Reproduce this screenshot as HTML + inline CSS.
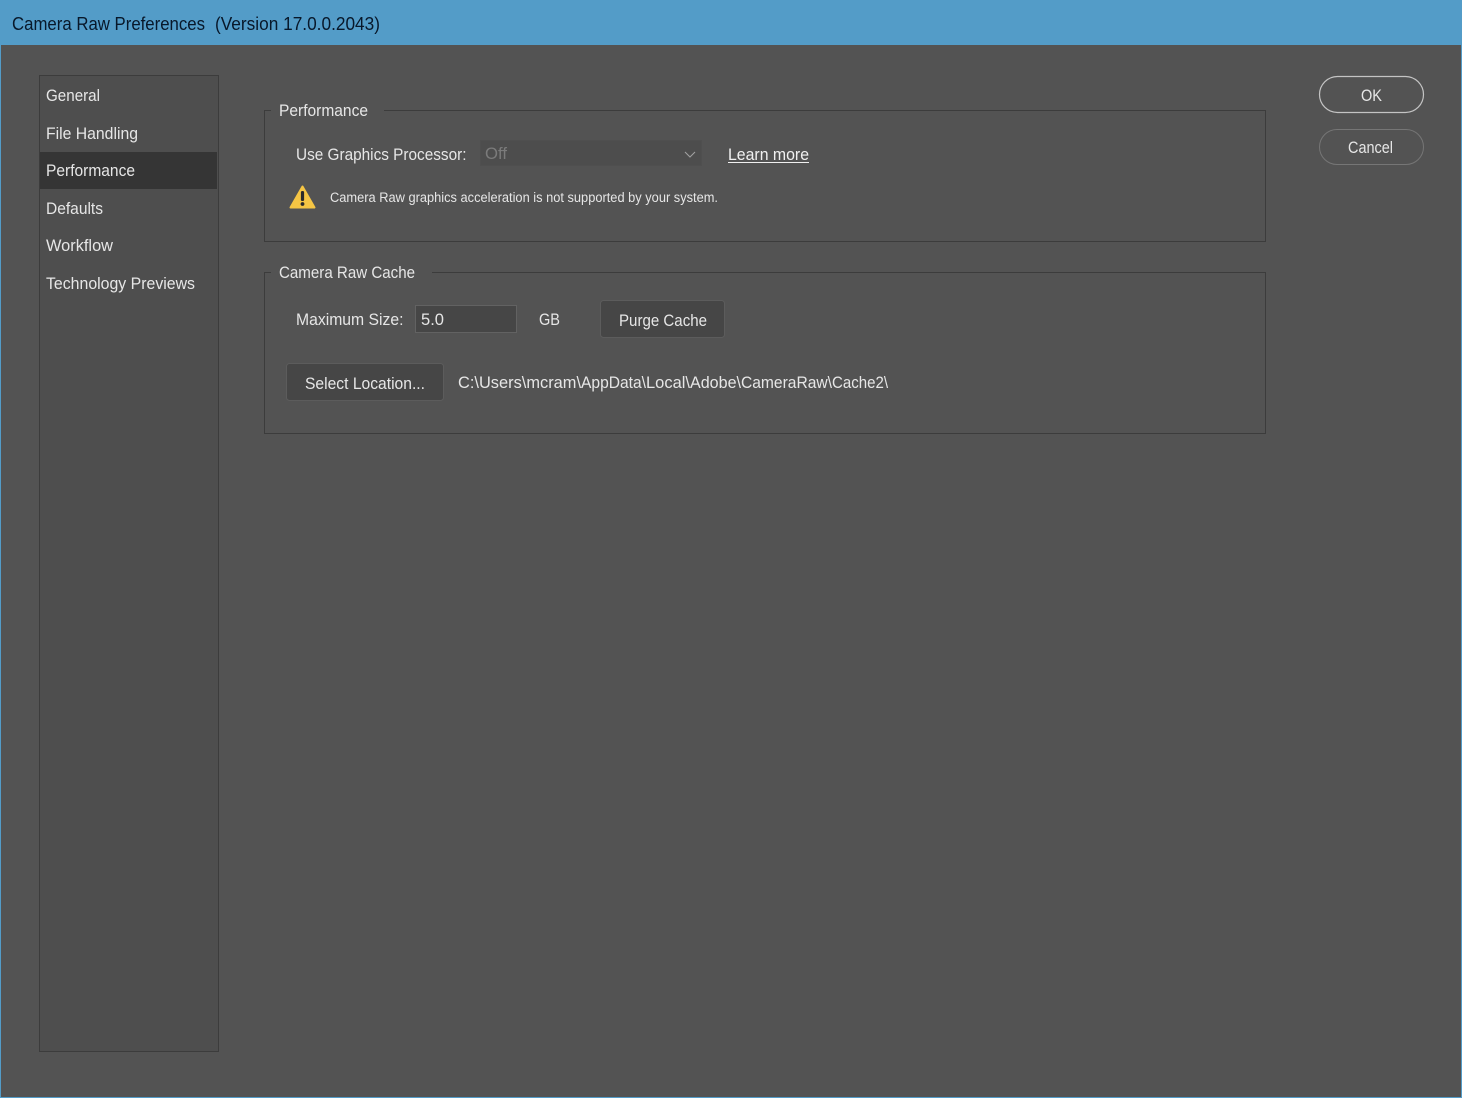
<!DOCTYPE html>
<html>
<head>
<meta charset="utf-8">
<title>Camera Raw Preferences</title>
<style>
html,body{margin:0;padding:0;background:#535353;width:1462px;height:1098px;overflow:hidden}
svg{display:block;position:absolute;left:0;top:0}
text{font-family:"Liberation Sans",sans-serif;font-size:17px;fill:#e6e6e6;white-space:pre}
</style>
</head>
<body>
<svg width="1462" height="1098" viewBox="0 0 1462 1098" xmlns="http://www.w3.org/2000/svg">
<rect x="0" y="0" width="1462" height="1098" fill="#539cc8"/>
<rect x="1" y="45" width="1460" height="1052" fill="#535353"/>
<text x="12" y="30" textLength="193" lengthAdjust="spacingAndGlyphs" style="font-size:18px;fill:#08182a">Camera Raw Preferences</text>
<text x="215" y="30" textLength="165" lengthAdjust="spacingAndGlyphs" style="font-size:18px;fill:#08182a">(Version 17.0.0.2043)</text>

<rect x="39.5" y="75.5" width="179" height="976" fill="#4e4e4e" stroke="#3c3c3c"/>
<rect x="40" y="152" width="177" height="37" fill="#353535"/>
<text x="46" y="101" textLength="54" lengthAdjust="spacingAndGlyphs">General</text>
<text x="46" y="139" textLength="92" lengthAdjust="spacingAndGlyphs">File Handling</text>
<text x="46" y="176" textLength="89" lengthAdjust="spacingAndGlyphs">Performance</text>
<text x="46" y="214" textLength="57" lengthAdjust="spacingAndGlyphs">Defaults</text>
<text x="46" y="251" textLength="67" lengthAdjust="spacingAndGlyphs">Workflow</text>
<text x="46" y="289" textLength="149" lengthAdjust="spacingAndGlyphs">Technology Previews</text>

<path d="M271 110.5H264.5V241.5H1265.5V110.5H384" fill="none" stroke="#3c3c3c"/>
<text x="279" y="116" textLength="89" lengthAdjust="spacingAndGlyphs">Performance</text>
<text x="296" y="160" textLength="170.5" lengthAdjust="spacingAndGlyphs">Use Graphics Processor:</text>
<rect x="480.5" y="140.5" width="221" height="25" fill="#4d4d4d" stroke="#4f4f4f"/>
<text x="485" y="159" textLength="22" lengthAdjust="spacingAndGlyphs" style="fill:#7b7b7b">Off</text>
<path d="M685 152L690 157L695 152" fill="none" stroke="#a0a0a0" stroke-width="1.1"/>
<text x="728" y="160" textLength="81" lengthAdjust="spacingAndGlyphs" style="fill:#f0f0f0">Learn more</text>
<rect x="728" y="162" width="81" height="1" fill="#f0f0f0"/>
<path d="M302.5 186.5L314.5 207.5H290.5Z" fill="#f5c544" stroke="#f5c544" stroke-width="2" stroke-linejoin="round"/>
<rect x="300.9" y="191" width="3.2" height="10" rx="1.4" fill="#2a2a2a"/>
<circle cx="302.5" cy="204" r="1.9" fill="#2a2a2a"/>
<text x="330" y="202" textLength="388" lengthAdjust="spacingAndGlyphs" style="font-size:13.5px">Camera Raw graphics acceleration is not supported by your system.</text>

<path d="M271 272.5H264.5V433.5H1265.5V272.5H432" fill="none" stroke="#3c3c3c"/>
<text x="279" y="278" textLength="136" lengthAdjust="spacingAndGlyphs">Camera Raw Cache</text>
<text x="296" y="325" textLength="107.5" lengthAdjust="spacingAndGlyphs">Maximum Size:</text>
<rect x="415.5" y="305.5" width="101" height="27" fill="#464646" stroke="#626262"/>
<text x="421" y="325" textLength="23" lengthAdjust="spacingAndGlyphs">5.0</text>
<text x="539" y="325" textLength="21" lengthAdjust="spacingAndGlyphs">GB</text>
<rect x="600.5" y="300.5" width="124" height="37" rx="3" fill="#464646" stroke="#5c5c5c"/>
<text x="619" y="326" textLength="88" lengthAdjust="spacingAndGlyphs">Purge Cache</text>
<rect x="286.5" y="363.5" width="157" height="37" rx="3" fill="#464646" stroke="#5c5c5c"/>
<text x="305" y="389" textLength="120" lengthAdjust="spacingAndGlyphs">Select Location...</text>
<text x="458" y="388" textLength="123" lengthAdjust="spacingAndGlyphs">C:\Users\mcram\</text>
<text x="581" y="388" textLength="65" lengthAdjust="spacingAndGlyphs">AppData\</text>
<text x="646" y="388" textLength="44" lengthAdjust="spacingAndGlyphs">Local\</text>
<text x="690" y="388" textLength="51" lengthAdjust="spacingAndGlyphs">Adobe\</text>
<text x="741" y="388" textLength="91" lengthAdjust="spacingAndGlyphs">CameraRaw\</text>
<text x="832" y="388" textLength="56" lengthAdjust="spacingAndGlyphs">Cache2\</text>

<rect x="1319.5" y="76.5" width="104" height="36" rx="18" fill="#535353" stroke="#c4c4c4" stroke-width="1.2"/>
<text x="1361" y="101" textLength="21" lengthAdjust="spacingAndGlyphs">OK</text>
<rect x="1319.5" y="129.5" width="104" height="35" rx="17.5" fill="#535353" stroke="#767676"/>
<text x="1348" y="153" textLength="45" lengthAdjust="spacingAndGlyphs">Cancel</text>
</svg>
</body>
</html>
